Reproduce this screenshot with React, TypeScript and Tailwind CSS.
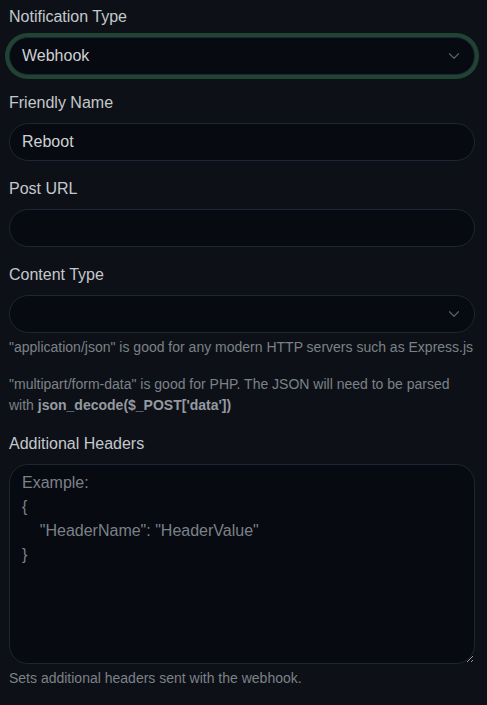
const font = { fontFamily: '"Liberation Sans", Arial, sans-serif' };

const Chevron = () => (
  <svg
    className="pointer-events-none absolute right-[13px] top-1/2 h-3 w-4 -translate-y-1/2"
    viewBox="0 0 16 16"
    fill="none"
  >
    <path d="m2 5 6 6 6-6" stroke="#566070" strokeWidth="1.6" strokeLinecap="round" strokeLinejoin="round" />
  </svg>
);

const Label = ({ children }: { children: React.ReactNode }) => (
  <label className="mb-2 block text-base leading-6 text-[#c4c8cc]">{children}</label>
);

const inputCls =
  "block h-[38px] w-full rounded-[19px] border border-[#1d2634] bg-[#070a10] px-[12px] text-base text-[#cdd1d5] outline-none";

export default function App() {
  return (
    <div className="min-h-[705px] bg-[#0d1117] pl-[9px] pr-[12px] pt-[5px]" style={font}>
      <div className="mb-4">
        <Label>Notification Type</Label>
        <div className="relative">
          <div className={`${inputCls} flex items-center shadow-[0_0_0_4px_rgba(92,221,139,0.25)]`}>Webhook</div>
          <Chevron />
        </div>
      </div>

      <div className="mb-4">
        <Label>Friendly Name</Label>
        <input className={inputCls} defaultValue="Reboot" style={font} />
      </div>

      <div className="mb-4">
        <Label>Post URL</Label>
        <input className={inputCls} style={font} />
      </div>

      <div className="mb-4">
        <Label>Content Type</Label>
        <div className="relative">
          <div className={inputCls}></div>
          <Chevron />
        </div>
        <div className="mt-1 text-sm leading-[21px] text-[#7c8188]">
          <p className="mb-4">"application/json" is good for any modern HTTP servers such as Express.js</p>
          <p className="mb-4">
            "multipart/form-data" is good for PHP. The JSON will need to be parsed with{" "}
            <strong className="font-bold text-[#959aa0]">json_decode($_POST['data'])</strong>
          </p>
        </div>
      </div>

      <div className="mb-4">
        <Label>Additional Headers</Label>
        <textarea
          className="block h-[200px] w-full rounded-[19px] border border-[#1d2634] bg-[#070a10] px-[12px] py-[6px] text-base leading-6 text-[#cdd1d5] outline-none placeholder:text-[#7c8188]"
          style={font}
          placeholder={'Example:\n{\n    "HeaderName": "HeaderValue"\n}'}
        />
        <div className="mt-1 text-sm leading-[21px] text-[#7c8188]">Sets additional headers sent with the webhook.</div>
      </div>
    </div>
  );
}
